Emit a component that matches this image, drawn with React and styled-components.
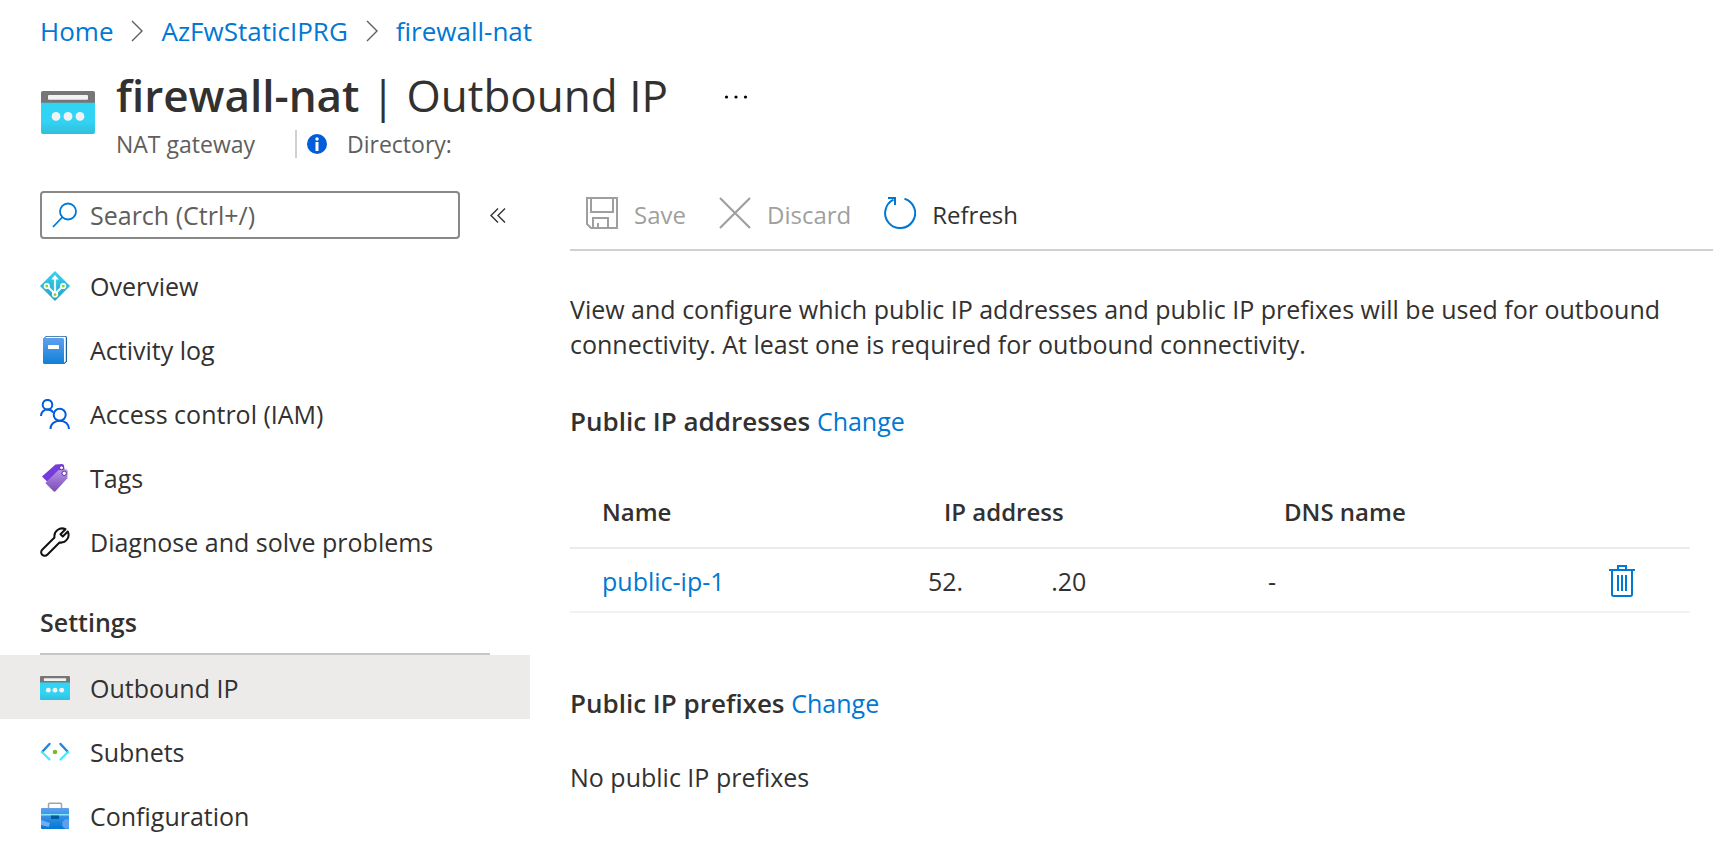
import React from "react";
import styled, { createGlobalStyle } from "styled-components";

const GlobalStyle = createGlobalStyle`
  * {
    box-sizing: border-box;
  }

  body {
    margin: 0;
    background: #fff;
    color: #323130;
    font-family: "Open Sans", "Noto Sans", sans-serif;
    font-size: 25px;
    line-height: 36px;
  }

  h1, h2, h3, p {
    margin: 0;
  }

  button, input {
    font: inherit;
    color: inherit;
  }

  svg {
    display: block;
    flex: none;
  }
`;

const Page = styled.div`
  height: 100vh;
  overflow: hidden;
`;

const Breadcrumb = styled.nav`
  display: flex;
  align-items: center;
  gap: 18px;
  padding: 11px 40px 0;
  font-size: 26px;
  line-height: 40px;
`;

const Link = styled.a`
  color: #0078d4;
  text-decoration: none;

  &:hover {
    text-decoration: underline;
  }
`;

const Header = styled.header`
  display: flex;
  align-items: flex-start;
  gap: 20px;
  padding: 15px 40px 0;
`;

const HeaderIcon = styled.div`
  padding: 25px 1px 0;
`;

const TitleRow = styled.div`
  display: flex;
  align-items: center;
  gap: 48px;
`;

const Title = styled.h1`
  padding-bottom: 4px;
  font-size: 44px;
  font-weight: 400;
  line-height: 58px;
`;

const Strong = styled.strong`
  font-weight: 600;
`;

const IconButton = styled.button`
  display: flex;
  align-items: center;
  justify-content: center;
  padding: 8px;
  border: 0;
  background: none;
  cursor: pointer;
`;

const Subtitle = styled.div`
  display: flex;
  align-items: center;
  color: #605e5c;
  font-size: 23px;
  line-height: 32px;
`;

const Directory = styled.div`
  display: flex;
  align-items: center;
  gap: 20px;
  margin-left: 40px;
`;

const Divider = styled.span`
  width: 2px;
  height: 28px;
  margin-right: -10px;
  background: #d2d0ce;
`;

const Body = styled.div`
  display: grid;
  grid-template-columns: 530px 1fr;
  column-gap: 40px;
  padding-top: 31px;
`;

const Sidebar = styled.aside`
  min-width: 0;
`;

const SearchRow = styled.div`
  display: flex;
  align-items: center;
  gap: 22px;
  padding: 0 16px 16px 40px;
`;

const SearchBox = styled.label`
  display: flex;
  align-items: center;
  gap: 12px;
  width: 420px;
  height: 48px;
  padding: 0 10px;
  border: 2px solid #8a8886;
  border-radius: 4px;
`;

const SearchInput = styled.input`
  flex: 1;
  min-width: 0;
  padding: 0;
  border: 0;
  outline: 0;
  background: none;

  &::placeholder {
    color: #605e5c;
    opacity: 1;
  }
`;

const MenuItem = styled.a`
  display: flex;
  align-items: center;
  gap: 20px;
  height: 64px;
  padding: ${(props) => (props.$grouped ? "2px 0 0 40px" : "0 0 2px 40px")};
  background: ${(props) => (props.$active ? "#edebe9" : "transparent")};
  color: inherit;
  text-decoration: none;

  &:hover {
    background: #f3f2f1;
  }
`;

const MenuHeading = styled.h3`
  margin: 0 40px;
  padding: 29px 0 13px;
  border-bottom: 2px solid #c8c6c4;
  font-size: 25px;
  font-weight: 600;
`;

const Main = styled.main`
  min-width: 0;
`;

const Toolbar = styled.div`
  display: flex;
  gap: 33px;
  padding: 0 16px 10px;
  border-bottom: 2px solid #d2d0ce;
`;

const ToolbarButton = styled.button`
  display: flex;
  align-items: center;
  gap: 16px;
  height: 48px;
  padding: 0;
  border: 0;
  background: none;
  color: ${(props) => (props.disabled ? "#a19f9d" : "#323130")};
  font-size: 24px;

  svg {
    margin-bottom: 4px;
  }
`;

const Content = styled.div`
  padding: 41px 23px 0 0;
`;

const Description = styled.p`
  line-height: 35px;
`;

const SectionTitle = styled.h2`
  margin-top: ${(props) => props.$top}px;
  font-size: 26px;
  font-weight: 600;
  line-height: 40px;

  a {
    font-size: 25px;
    font-weight: 400;
  }
`;

const Table = styled.table`
  width: 100%;
  margin-top: 32px;
  border-collapse: collapse;
  table-layout: fixed;
  text-align: left;
`;

const HeadCell = styled.th`
  width: ${(props) => props.$width};
  height: 75px;
  padding: 3px 0 0 32px;
  border-bottom: 2px solid #edebe9;
  font-size: 24px;
  font-weight: 600;
`;

const Cell = styled.td`
  height: 64px;
  padding: 1px 0 0 ${(props) => (props.$indent ? 32 : 16)}px;
  border-bottom: 2px solid #f3f2f1;
`;

const HiddenOctets = styled.span`
  display: inline-block;
  width: 88px;
`;

const EmptyText = styled.p`
  margin-top: 36px;
`;

const ChevronIcon = () => (
  <svg width="12" height="22" viewBox="0 0 12 22" fill="none" stroke="#605e5c" strokeWidth="1.4">
    <path d="M1 1l10 10L1 21" />
  </svg>
);

const OutboundIcon = ({ width, height, id }) => (
  <svg width={width} height={height} viewBox="0 0 54 44" preserveAspectRatio="none">
    <defs>
      <linearGradient id={id} x1="0" y1="0" x2="0" y2="1">
        <stop offset="0.6" stopColor="#32d4f5" />
        <stop offset="1" stopColor="#32bedd" />
      </linearGradient>
    </defs>
    <path d="M0 11h54v31a2 2 0 0 1-2 2H2a2 2 0 0 1-2-2z" fill={`url(#${id})`} />
    <path d="M2 0h50a2 2 0 0 1 2 2v10H0V2a2 2 0 0 1 2-2z" fill="#767676" />
    <rect x="7" y="4" width="40" height="5" rx="1" fill="#f2f2f2" />
    <circle cx="15" cy="26" r="4.4" fill="#f2f2f2" />
    <circle cx="27" cy="26" r="4.4" fill="#f2f2f2" />
    <circle cx="39" cy="26" r="4.4" fill="#f2f2f2" />
  </svg>
);

const MoreIcon = () => (
  <svg width="24" height="4" viewBox="0 0 24 4">
    <circle cx="2.5" cy="2" r="1.6" />
    <circle cx="12" cy="2" r="1.6" />
    <circle cx="21.5" cy="2" r="1.6" />
  </svg>
);

const InfoIcon = () => (
  <svg width="20" height="20" viewBox="0 0 20 20">
    <circle cx="10" cy="10" r="10" fill="#015cda" />
    <circle cx="10" cy="5" r="1.7" fill="#fff" />
    <rect x="8.5" y="8" width="3" height="9" fill="#fff" />
  </svg>
);

const SearchIcon = () => (
  <svg width="26" height="26" viewBox="0 0 26 26" fill="none" stroke="#0078d4" strokeWidth="1.8">
    <circle cx="16" cy="9.5" r="8" />
    <path d="M10.500 15L1 25" />
  </svg>
);

const CollapseIcon = () => (
  <svg width="16" height="15" viewBox="0 0 16 15" fill="none" stroke="#323130" strokeWidth="1.4">
    <path d="M8 .5L1 7.5l7 7M15 .5L8 7.5l7 7" />
  </svg>
);

const OverviewIcon = () => (
  <svg width="30" height="30" viewBox="0 0 30 30">
    <defs>
      <linearGradient id="overview" x1="0" y1="0" x2="0" y2="1">
        <stop offset="0" stopColor="#32d4f5" />
        <stop offset="1" stopColor="#2a9cc4" />
      </linearGradient>
    </defs>
    <path d="M15 0l15 15-15 15L0 15z" fill="url(#overview)" />
    <path d="M15 23V7M7 15l8 8 8-8" fill="none" stroke="#e6f7fb" strokeWidth="2.2" />
    <path d="M15 4l3.800 4.500h-7.600z" fill="#fff" />
    <g fill="#86d633" stroke="#fff" strokeWidth="1.6">
      <circle cx="6.8" cy="15" r="2.3" />
      <circle cx="23.2" cy="15" r="2.3" />
      <circle cx="15" cy="23.4" r="2.3" />
    </g>
  </svg>
);

const ActivityIcon = () => (
  <svg width="30" height="30" viewBox="0 0 30 30">
    <defs>
      <linearGradient id="activity" x1="0" y1="0" x2="0" y2="1">
        <stop offset="0" stopColor="#5ea0ef" />
        <stop offset="1" stopColor="#0f80d7" />
      </linearGradient>
    </defs>
    <path d="M3 4l3-3h19.500a1.500 1.500 0 0 1 1.500 1.500v24l-2.500 2.500H5z" fill="#1b6099" />
    <path d="M5 3l1.500-1.200H25a.8.8 0 0 1 .8.8v23.600L24 28z" fill="#fff" />
    <path d="M3 4.500A1.500 1.500 0 0 1 4.500 3h18A1.500 1.500 0 0 1 24 4.500V29H4.500A1.500 1.500 0 0 1 3 27.500z" fill="url(#activity)" />
    <rect x="8" y="10" width="11" height="4" rx=".5" fill="#fff" />
  </svg>
);

const AccessIcon = () => (
  <svg width="30" height="30" viewBox="0 0 30 30" fill="none" stroke="#015cda" strokeWidth="2">
    <circle cx="7.500" cy="5.700" r="4.800" />
    <path d="M1 17c0-4 3-6.500 6.500-6.500 2.300 0 4.500 1 5.700 3" />
    <circle cx="19.700" cy="15.700" r="6" />
    <path d="M10.500 30c0-5 4-8.300 9.300-8.300S29 25 29 30" />
  </svg>
);

const TagsIcon = () => (
  <svg width="30" height="30" viewBox="0 0 30 30">
    <defs>
      <linearGradient id="tags" x1="0" y1="0" x2="0" y2="1">
        <stop offset="0" stopColor="#b796e8" />
        <stop offset="1" stopColor="#7a4cb8" />
      </linearGradient>
    </defs>
    <path d="M15.500 1.500L22 1a2 2 0 0 1 2 1.500l.8 6L7 18.500l-5-5z" fill="#773adc" />
    <path d="M18.500 7l7-.8a2 2 0 0 1 2.200 2l-.3 7L15.500 28.300a1.500 1.500 0 0 1-2 0L5.300 20z" fill="url(#tags)" />
    <circle cx="21.500" cy="4.800" r="2" fill="#fff" stroke="#552f99" />
    <circle cx="24.200" cy="10.300" r="2.200" fill="#fff" stroke="#552f99" />
  </svg>
);

const DiagnoseIcon = () => (
  <svg width="30" height="30" viewBox="0 0 30 30" fill="none" stroke="#111" strokeWidth="2" strokeLinejoin="round">
    <path d="M25.500 2.200a7.800 7.800 0 0 0-11 8.300L2.200 22.700a3.600 3.600 0 0 0 5.100 5.100L19.500 15.500a7.800 7.800 0 0 0 8.300-11l-5 5-2.300-2.300z" />
  </svg>
);

const SubnetsIcon = () => (
  <svg width="30" height="30" viewBox="0 0 30 30" fill="none" strokeWidth="2.400" strokeLinecap="round">
    <path d="M9.500 7L2 15M20.500 7l7.500 8" stroke="#1987dd" />
    <path d="M2 15l7.500 7.500M28 15l-7.500 7.500" stroke="#50e6ff" />
    <circle cx="15" cy="15" r="2.300" fill="#76bc2d" />
  </svg>
);

const ConfigurationIcon = () => (
  <svg width="30" height="30" viewBox="0 0 30 30">
    <defs>
      <linearGradient id="config" x1="0" y1="0" x2="0" y2="1">
        <stop offset="0" stopColor="#5ea0ef" />
        <stop offset="1" stopColor="#0078d4" />
      </linearGradient>
    </defs>
    <path d="M8.500 8V3.500A1.200 1.200 0 0 1 9.700 2.300h10.600a1.200 1.200 0 0 1 1.200 1.200V8" fill="none" stroke="#a3a3a3" strokeWidth="1.500" />
    <rect x="1" y="7" width="28" height="21" rx="1" fill="url(#config)" />
    <path d="M1 13h28v1.500H1z" fill="#83e9fa" />
    <rect x="11" y="14.500" width="8" height="3.500" fill="#005ba1" />
    <path d="M1 19l9 3-1.300 4L1 24z" fill="#6fadf5" />
    <path d="M29 18.500a5 5 0 0 0-5.500 8A5 5 0 0 0 29 27z" fill="#5ea0ef" />
  </svg>
);

const SaveIcon = () => (
  <svg width="32" height="32" viewBox="0 0 32 32" fill="none" stroke="#a19f9d" strokeWidth="2">
    <path d="M1 1h30v30H5l-4-4z" />
    <path d="M5 1v14h22V1M7 31V21h15v10M12 31v-5" />
  </svg>
);

const DiscardIcon = () => (
  <svg width="32" height="32" viewBox="0 0 32 32" fill="none" stroke="#a19f9d" strokeWidth="2.200">
    <path d="M1 1l30 30M31 1L1 31" />
  </svg>
);

const RefreshIcon = () => (
  <svg width="32" height="32" viewBox="0 0 32 32" fill="none" stroke="#0078d4" strokeWidth="2">
    <path d="M20.500 1.700A15 15 0 1 1 9.500 2.600" />
    <path d="M4 1h7v7" />
  </svg>
);

const DeleteIcon = () => (
  <svg width="26" height="32" viewBox="0 0 26 32" fill="none" stroke="#0078d4" strokeWidth="2">
    <path d="M0 5h26M9 5V1h8v4M3 5v24.500a1.500 1.500 0 0 0 1.500 1.500h17a1.500 1.500 0 0 0 1.500-1.500V5M9 10v16M13 10v16M17 10v16" />
  </svg>
);

const generalItems = [
  { name: "Overview", icon: <OverviewIcon /> },
  { name: "Activity log", icon: <ActivityIcon /> },
  { name: "Access control (IAM)", icon: <AccessIcon /> },
  { name: "Tags", icon: <TagsIcon /> },
  { name: "Diagnose and solve problems", icon: <DiagnoseIcon /> },
];

const settingsItems = [
  { name: "Outbound IP", icon: <OutboundIcon width={30} height={24} id="outboundMenu" />, active: true },
  { name: "Subnets", icon: <SubnetsIcon /> },
  { name: "Configuration", icon: <ConfigurationIcon /> },
];

const Menu = ({ items, grouped }) => (
  <nav>
    {items.map((item) => (
      <MenuItem key={item.name} href="#" $active={item.active} $grouped={grouped}>
        {item.icon}
        {item.name}
      </MenuItem>
    ))}
  </nav>
);

const App = () => {
  return (
    <Page>
      <GlobalStyle />
      <Breadcrumb>
        <Link href="#">Home</Link>
        <ChevronIcon />
        <Link href="#">AzFwStaticIPRG</Link>
        <ChevronIcon />
        <Link href="#">firewall-nat</Link>
      </Breadcrumb>

      <Header>
        <HeaderIcon>
          <OutboundIcon width={54} height={43} id="outboundHeader" />
        </HeaderIcon>
        <div>
          <TitleRow>
            <Title>
              <Strong>firewall-nat</Strong> | Outbound IP
            </Title>
            <IconButton aria-label="More">
              <MoreIcon />
            </IconButton>
          </TitleRow>
          <Subtitle>
            NAT gateway
            <Directory>
              <Divider />
              <InfoIcon />
              Directory:
            </Directory>
          </Subtitle>
        </div>
      </Header>

      <Body>
        <Sidebar>
          <SearchRow>
            <SearchBox>
              <SearchIcon />
              <SearchInput type="text" aria-label="Search" placeholder="Search (Ctrl+/)" />
            </SearchBox>
            <IconButton aria-label="Collapse menu">
              <CollapseIcon />
            </IconButton>
          </SearchRow>
          <Menu items={generalItems} />
          <MenuHeading>Settings</MenuHeading>
          <Menu items={settingsItems} grouped />
        </Sidebar>

        <Main>
          <Toolbar>
            <ToolbarButton disabled>
              <SaveIcon />
              Save
            </ToolbarButton>
            <ToolbarButton disabled>
              <DiscardIcon />
              Discard
            </ToolbarButton>
            <ToolbarButton>
              <RefreshIcon />
              Refresh
            </ToolbarButton>
          </Toolbar>

          <Content>
            <Description>
              View and configure which public IP addresses and public IP prefixes will be used for outbound
              connectivity. At least one is required for outbound connectivity.
            </Description>

            <SectionTitle $top={39}>
              Public IP addresses <Link href="#">Change</Link>
            </SectionTitle>
            <Table>
              <thead>
                <tr>
                  <HeadCell $width="342px">Name</HeadCell>
                  <HeadCell $width="340px">IP address</HeadCell>
                  <HeadCell>DNS name</HeadCell>
                  <HeadCell $width="105px" aria-label="Actions" />
                </tr>
              </thead>
              <tbody>
                <tr>
                  <Cell $indent>
                    <Link href="#">public-ip-1</Link>
                  </Cell>
                  <Cell>
                    52.
                    <HiddenOctets />
                    .20
                  </Cell>
                  <Cell>-</Cell>
                  <Cell>
                    <IconButton aria-label="Delete">
                      <DeleteIcon />
                    </IconButton>
                  </Cell>
                </tr>
              </tbody>
            </Table>

            <SectionTitle $top={70}>
              Public IP prefixes <Link href="#">Change</Link>
            </SectionTitle>
            <EmptyText>No public IP prefixes</EmptyText>
          </Content>
        </Main>
      </Body>
    </Page>
  );
};

export default App;
